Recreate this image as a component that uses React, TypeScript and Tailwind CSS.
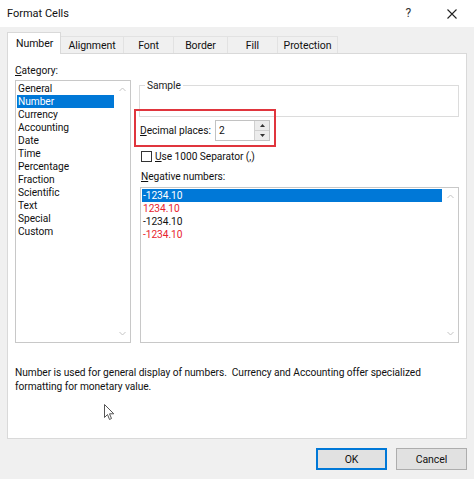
import React from 'react';

const categories = [
  'General',
  'Number',
  'Currency',
  'Accounting',
  'Date',
  'Time',
  'Percentage',
  'Fraction',
  'Scientific',
  'Text',
  'Special',
  'Custom',
];

const negatives = [
  { label: '-1234.10', red: false },
  { label: '1234.10', red: true },
  { label: '-1234.10', red: false },
  { label: '-1234.10', red: true },
];

const tabs = [
  { label: 'Number', w: 'w-[54px]' },
  { label: 'Alignment', w: 'w-[63px]' },
  { label: 'Font', w: 'w-[50px]' },
  { label: 'Border', w: 'w-[54px]' },
  { label: 'Fill', w: 'w-[50px]' },
  { label: 'Protection', w: 'w-[60px]' },
];

const Chevron: React.FC<{ up?: boolean }> = ({ up }) => (
  <svg width="7" height="5" viewBox="0 0 7 5">
    <polyline
      points={up ? '0.5,4 3.5,1 6.5,4' : '0.5,1 3.5,4 6.5,1'}
      fill="none"
      stroke="#c4c4c4"
      strokeWidth="1"
    />
  </svg>
);

const ScrollBar: React.FC = () => (
  <div className="w-[16px] h-full flex flex-col justify-between items-center py-[6px] bg-white">
    <Chevron up />
    <Chevron />
  </div>
);

const App: React.FC = () => {
  return (
    <div className="relative w-[474px] h-[479px] overflow-hidden bg-[#f0f0f0] text-[10.2px] tracking-[-0.05px] text-[#111] font-['Roboto',sans-serif] leading-[13px] whitespace-nowrap select-none">
      {/* Title bar */}
      <div className="h-[27px] bg-white flex items-center pl-[7px]">
        <span className="text-[11px] tracking-normal">Format Cells</span>
        <span className="ml-auto text-[12px] text-[#333]">?</span>
        <svg className="ml-[36px] mr-[17px]" width="10" height="10" viewBox="0 0 10 10">
          <path d="M0.5 0.5 L9.5 9.5 M9.5 0.5 L0.5 9.5" stroke="#222" strokeWidth="1.1" />
        </svg>
      </div>

      {/* Tabs */}
      <div className="flex items-end h-[26px] pl-[7px] text-[10.5px]">
        {tabs.map((tab, i) =>
          i === 0 ? (
            <div
              key={tab.label}
              className={`${tab.w} relative z-10 -mb-px h-[22px] bg-white border border-b-0 border-[#d9d9d9] flex items-center pl-[8px]`}
            >
              {tab.label}
            </div>
          ) : (
            <div
              key={tab.label}
              className={`${tab.w} h-[17px] border border-b-0 border-l-0 border-[#e2e2e2] flex items-center justify-center`}
            >
              {tab.label}
            </div>
          )
        )}
      </div>

      {/* Panel */}
      <div className="relative mx-[7px] h-[386px] bg-white border border-[#d9d9d9] pl-[7px]">
        <div className="flex">
          {/* Category column */}
          <div className="w-[116px]">
            <div className="mt-[10px] h-[14px] leading-[14px]">
              <span className="underline underline-offset-1">C</span>ategory:
            </div>
            <div className="mt-[2px] h-[263px] border border-[#c8c8c8] flex">
              <div className="flex-1 pt-px pl-px">
                {categories.map((c) => (
                  <div
                    key={c}
                    className={`h-[13px] pl-px ${c === 'Number' ? 'bg-[#0078d7] text-white' : ''}`}
                  >
                    {c}
                  </div>
                ))}
              </div>
              <ScrollBar />
            </div>
          </div>

          {/* Right column */}
          <div className="ml-[8px] w-[320px]">
            <fieldset className="mt-[25px] h-[38px] border border-[#dcdcdc] pl-[5px]">
              <legend className="px-[2px] text-[#222] leading-[13px]">Sample</legend>
            </fieldset>

            <div className="relative mt-[3px] h-[21px] flex items-center pl-px">
              <div className="absolute -left-[5px] -top-[11px] w-[142px] h-[38px] border-2 border-[#e0353d]" />
              <span className="w-[75px]">
                <span className="underline underline-offset-1">D</span>ecimal places:
              </span>
              <div className="h-[21px] w-[55px] border border-[#c2c2c2] flex">
                <div className="flex-1 pl-[3px] flex items-center">2</div>
                <div className="w-[15px] flex flex-col bg-[#ececec] border-l border-[#d0d0d0]">
                  <div className="flex-1 flex items-center justify-center border-b border-[#d0d0d0]">
                    <svg width="5" height="3" viewBox="0 0 5 3">
                      <polygon points="0,3 2.5,0 5,3" fill="#333" />
                    </svg>
                  </div>
                  <div className="flex-1 flex items-center justify-center">
                    <svg width="5" height="3" viewBox="0 0 5 3">
                      <polygon points="0,0 2.5,3 5,0" fill="#333" />
                    </svg>
                  </div>
                </div>
              </div>
            </div>

            <div className="mt-[9px] h-[13px] flex items-center pl-[2px]">
              <div className="w-[11px] h-[11px] border border-[#333] bg-white" />
              <span className="ml-[3px]">
                <span className="underline underline-offset-1">U</span>se 1000 Separator (,)
              </span>
            </div>

            <div className="mt-[7px] h-[14px] leading-[14px] pl-[2px]">
              <span className="underline underline-offset-1">N</span>egative numbers:
            </div>

            <div className="mt-[3px] ml-px h-[156px] border border-[#c8c8c8] flex">
              <div className="flex-1 pt-px pl-px">
                {negatives.map((n, i) => (
                  <div
                    key={i}
                    className={`h-[13px] pl-px ${
                      i === 0 ? 'bg-[#0078d7] text-white' : n.red ? 'text-[#e8232e]' : ''
                    }`}
                  >
                    {n.label}
                  </div>
                ))}
              </div>
              <ScrollBar />
            </div>
          </div>
        </div>

        {/* Description */}
        <p className="mt-[23px] leading-[14px]">
          Number is used for general display of numbers.&nbsp; Currency and Accounting offer specialized
          <br />
          formatting for monetary value.
        </p>

        {/* Mouse pointer */}
        <svg className="absolute left-[96px] top-[350px]" width="11" height="17" viewBox="0 0 11 17">
          <path
            d="M0.5 0.5 L0.5 13.5 L3.5 10.5 L5.5 15.5 L7.5 14.5 L5.5 9.8 L9.8 9.8 Z"
            fill="#fff"
            stroke="#555"
            strokeWidth="1"
            strokeLinejoin="round"
          />
        </svg>
      </div>

      {/* Buttons */}
      <div className="flex justify-end gap-[9px] pr-[7px] pt-[9px] text-[10.5px]">
        <button className="w-[71px] h-[22px] bg-[#e1e1e1] border-2 border-[#0078d7] flex items-center justify-center">
          OK
        </button>
        <button className="w-[71px] h-[22px] bg-[#e1e1e1] border border-[#adadad] flex items-center justify-center">
          Cancel
        </button>
      </div>
    </div>
  );
};

export default App;
